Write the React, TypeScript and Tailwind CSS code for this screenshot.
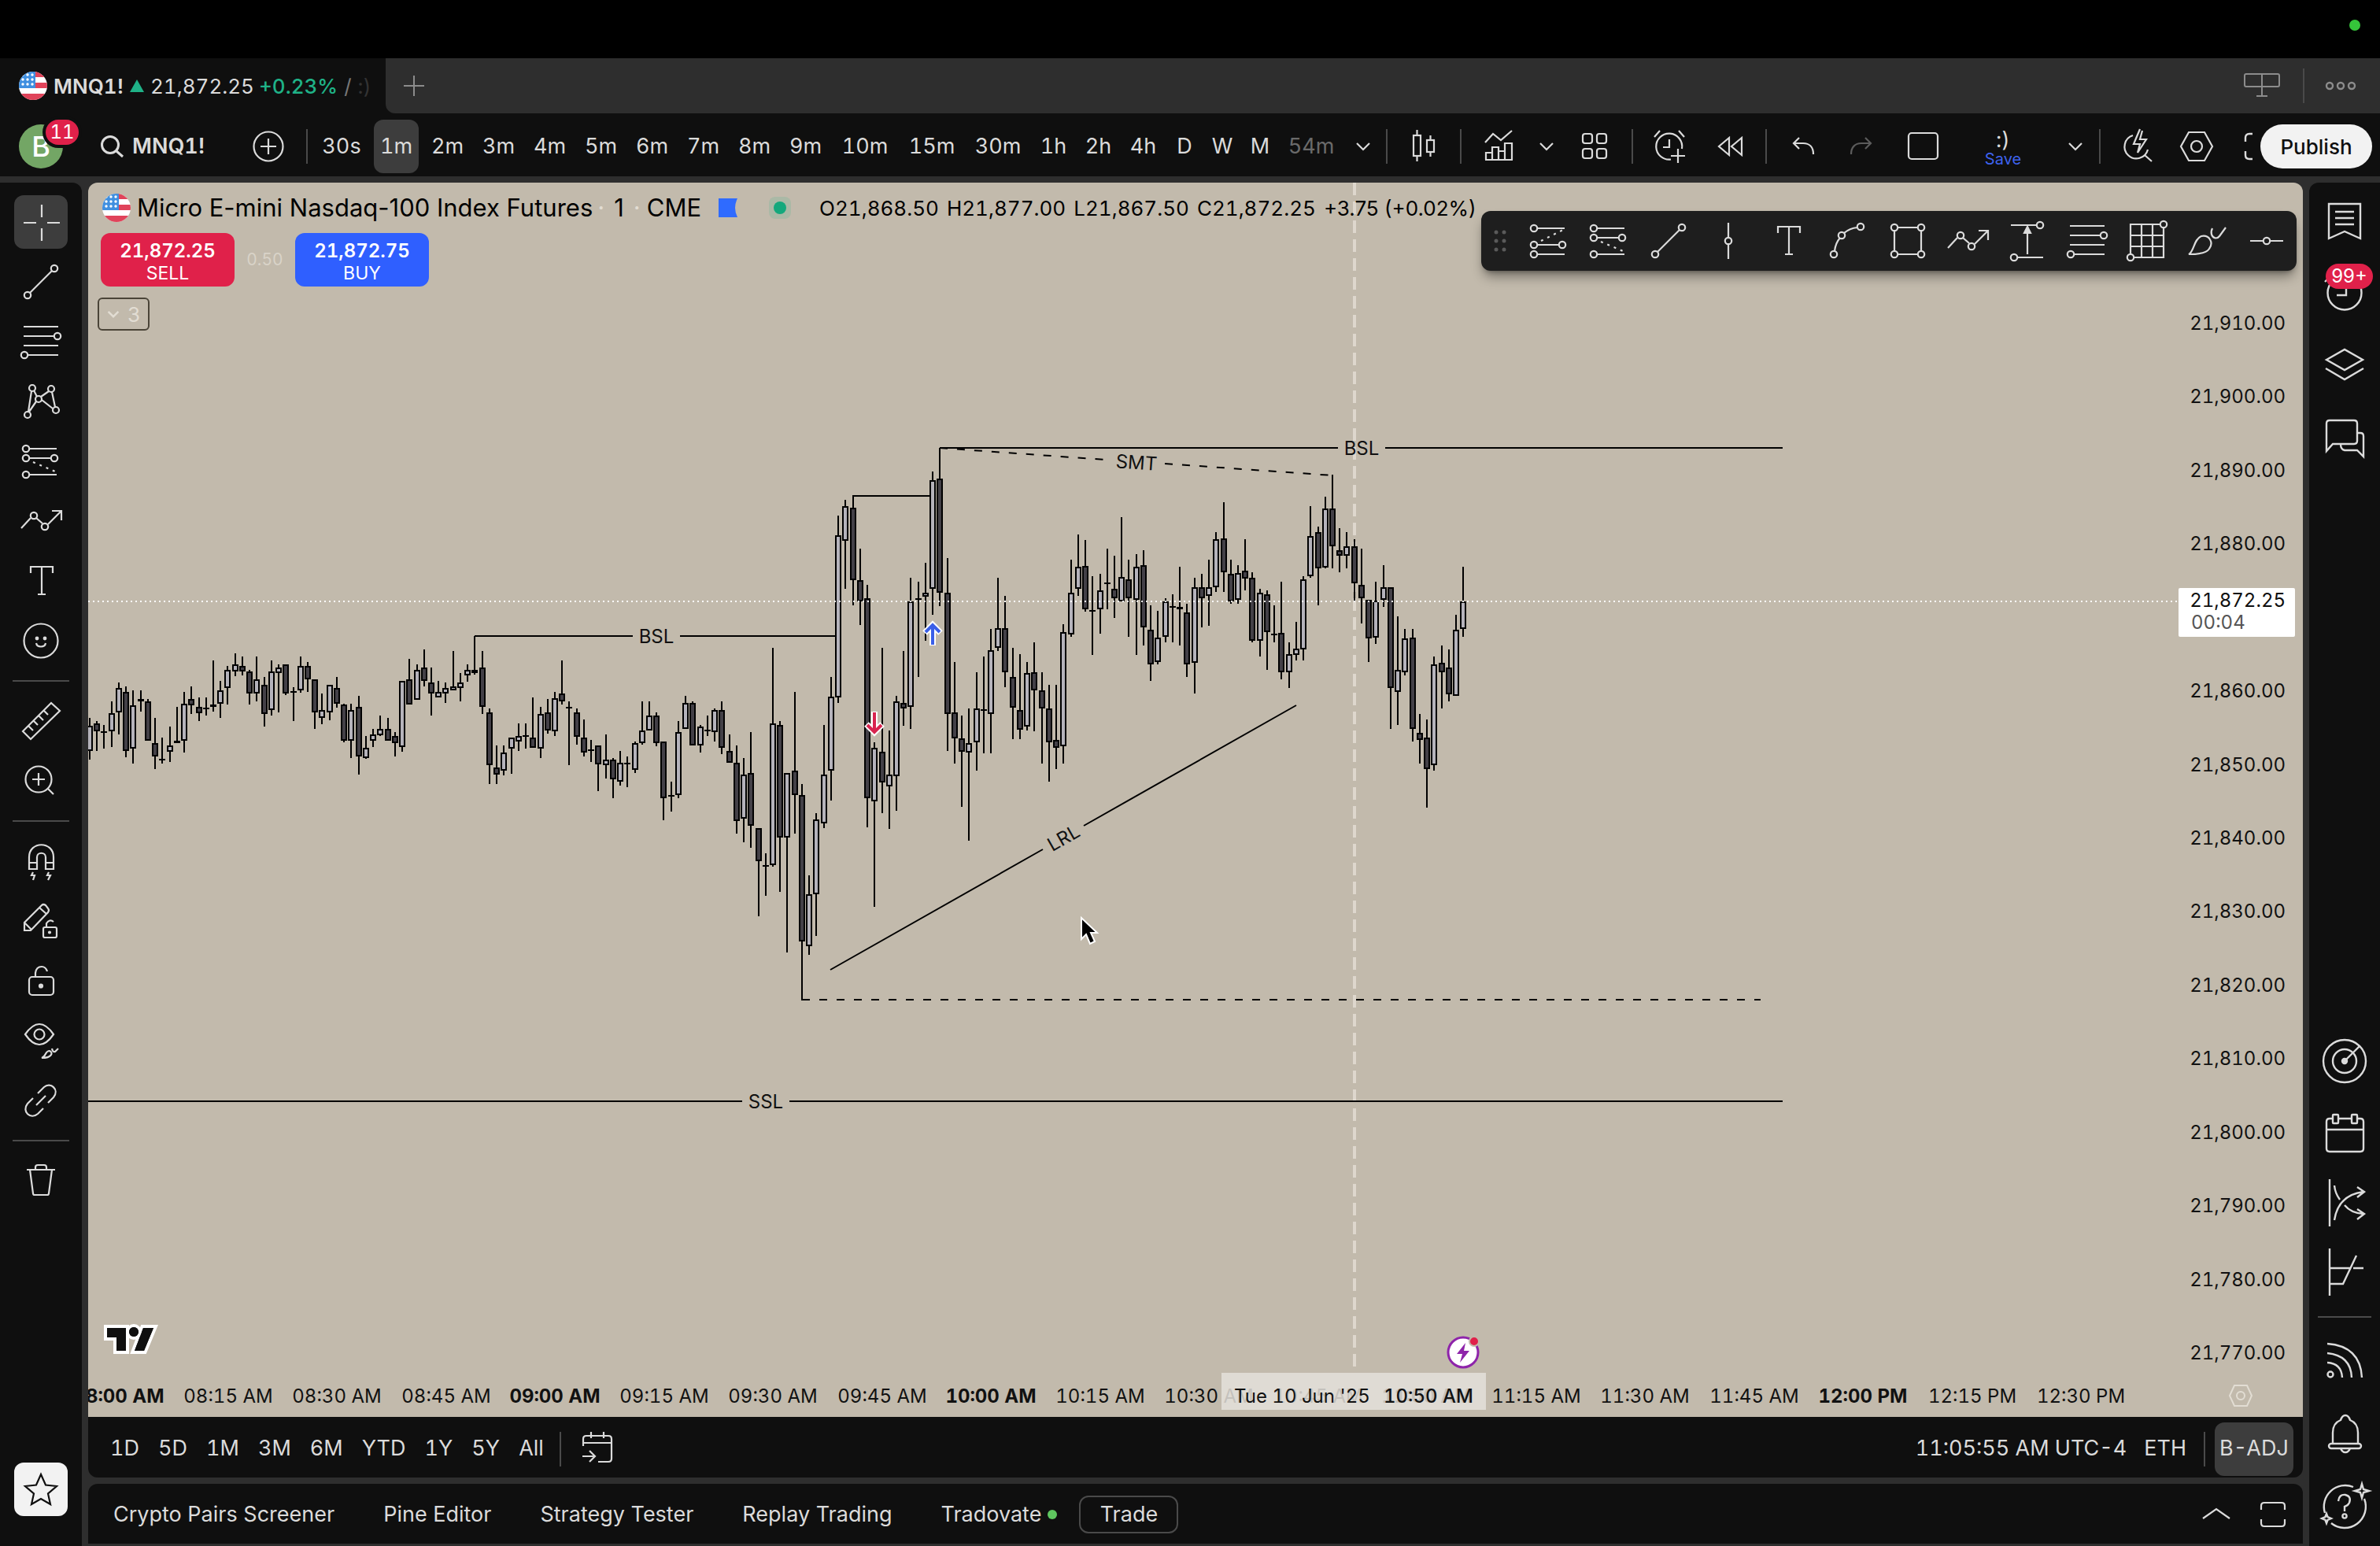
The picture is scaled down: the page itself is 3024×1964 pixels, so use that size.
import React from 'react';

type Bar = [kind: 'u' | 'd', high: number, top: number, bottom: number, low: number];

type Run = { start: number; base: number; unit: number; bars: Bar[] };

// Bars are stored per run, measured down from `base` in steps of 1 / unit
const runs: Run[] = [
  {
    start: 0,
    base: 780,
    unit: 3,
    bars: [
      ['u', 397, 427, 523, 555], ['d', 408, 418, 446, 521], ['d', 424, 446, 451, 512], ['u', 333, 377, 446, 507],
      ['u', 262, 283, 376, 458], ['d', 277, 298, 523, 547], ['u', 291, 347, 514, 569], ['d', 291, 325, 334, 373],
      ['d', 325, 334, 482, 482], ['d', 397, 493, 544, 590], ['d', 472, 552, 557, 570], ['u', 430, 502, 524, 563],
      ['u', 354, 482, 493, 493], ['u', 298, 341, 482, 527], ['d', 277, 325, 347, 380], ['d', 318, 355, 377, 407],
      ['d', 318, 357, 362, 386], ['d', 178, 346, 355, 373], ['u', 256, 292, 341, 395], ['u', 199, 214, 283, 345],
      ['u', 151, 193, 220, 238], ['d', 163, 199, 220, 233], ['d', 214, 220, 304, 345], ['u', 163, 250, 304, 332],
      ['d', 240, 271, 382, 428], ['u', 178, 220, 367, 386], ['u', 193, 205, 226, 374], ['d', 193, 193, 304, 310],
      ['d', 278, 293, 298, 407], ['u', 163, 199, 292, 301], ['d', 184, 199, 250, 297], ['d', 250, 250, 376, 438],
      ['u', 304, 367, 397, 421], ['u', 271, 271, 376, 406], ['d', 240, 283, 341, 358], ['d', 341, 346, 482, 490],
      ['u', 341, 367, 482, 548], ['d', 312, 355, 544, 611], ['u', 466, 509, 550, 553], ['u', 439, 460, 482, 506],
      ['u', 388, 439, 461, 464], ['d', 397, 439, 482, 482], ['d', 451, 466, 493, 542], ['u', 256, 256, 508, 526],
      ['d', 172, 250, 346, 346], ['u', 193, 214, 326, 326], ['d', 136, 205, 256, 275], ['d', 205, 262, 304, 386],
      ['u', 256, 298, 319, 319], ['u', 262, 283, 304, 338], ['u', 142, 277, 292, 292], ['u', 226, 262, 283, 332],
      ['u', 193, 214, 235, 259], ['u', 85, 214, 226, 232], ['d', 142, 205, 355, 380], ['d', 361, 376, 577, 648],
      ['d', 502, 586, 613, 648], ['u', 502, 529, 598, 616], ['u', 472, 472, 514, 610], ['u', 418, 466, 487, 521],
      ['d', 418, 461, 466, 512], ['d', 318, 472, 509, 509], ['u', 354, 382, 514, 548], ['d', 325, 376, 445, 457],
      ['u', 298, 320, 446, 464], ['d', 178, 304, 334, 344], ['d', 334, 355, 360, 575], ['d', 361, 376, 467, 499],
      ['d', 403, 472, 529, 542], ['d', 480, 515, 522, 563], ['d', 502, 502, 572, 676], ['u', 460, 556, 577, 627],
      ['d', 550, 556, 629, 701], ['u', 522, 566, 640, 653], ['d', 543, 566, 571, 659], ['u', 487, 493, 593, 605],
      ['u', 333, 445, 493, 499], ['u', 333, 388, 445, 445], ['d', 376, 388, 493, 505], ['d', 487, 487, 703, 785],
      ['d', 640, 690, 697, 752], ['u', 408, 451, 691, 701], ['u', 312, 340, 439, 439], ['d', 334, 340, 502, 502],
      ['u', 424, 430, 502, 527], ['d', 388, 441, 446, 464], ['u', 361, 367, 451, 485], ['d', 333, 367, 509, 533],
      ['d', 460, 523, 566, 566], ['d', 502, 566, 788, 836], ['u', 550, 613, 781, 869], ['d', 451, 607, 808, 890],
      ['d', 817, 817, 943, 1151], ['d', 913, 956, 964, 1073], ['u', 130, 418, 956, 962], ['d', 408, 424, 851, 1058],
      ['u', 607, 607, 851, 1291], ['d', 298, 598, 691, 836], ['d', 649, 691, 1249, 1472], ['u', 997, 1069, 1265, 1298],
      ['u', 760, 782, 1069, 1226], ['u', 424, 613, 797, 815], ['u', 241, 314, 598, 711],
    ],
  },
  {
    start: 103,
    base: 540,
    unit: 2.178,
    bars: [
      ['u', 251, 306, 754, 768], ['u', 206, 225, 321, 453], ['d', 196, 229, 428, 498], ['d', 343, 428, 488, 554],
      ['d', 443, 480, 1032, 1114], ['u', 877, 892, 1040, 1333], ['d', 617, 903, 988, 1074], ['u', 845, 968, 999, 1118],
      ['u', 750, 765, 971, 1068], ['d', 626, 769, 784, 833], ['u', 422, 488, 780, 840], ['d', 434, 480, 484, 696],
      ['u', 381, 464, 474, 597], ['u', 128, 153, 454, 524], ['d', 63, 149, 465, 502], ['d', 367, 465, 800, 902],
      ['d', 656, 796, 866, 936], ['d', 804, 866, 903, 1057], ['u', 784, 881, 907, 1149], ['u', 683, 785, 877, 956],
      ['d', 641, 786, 790, 909], ['u', 565, 622, 800, 909], ['u', 422, 561, 617, 624], ['d', 473, 561, 683, 726],
      ['d', 617, 698, 781, 870], ['d', 633, 788, 842, 870], ['u', 656, 687, 835, 845], ['d', 602, 683, 735, 848],
      ['d', 683, 735, 785, 936], ['d', 719, 785, 877, 987], ['d', 719, 872, 892, 951], ['u', 550, 572, 888, 936],
      ['u', 373, 464, 580, 585], ['u', 302, 393, 454, 472], ['d', 317, 389, 510, 517], ['d', 418, 511, 515, 635],
      ['u', 412, 458, 510, 578],
    ],
  },
  {
    start: 140,
    base: 540,
    unit: 2.8,
    bars: [
      ['d', 440, 561, 566, 655], ['d', 465, 583, 617, 686], ['u', 328, 540, 628, 628], ['d', 480, 550, 617, 752],
      ['u', 460, 505, 622, 818], ['d', 445, 499, 720, 783], ['d', 641, 727, 852, 910], ['u', 661, 755, 844, 850],
      ['u', 616, 628, 753, 773], ['d', 603, 645, 650, 773], ['d', 505, 647, 656, 783], ['d', 636, 667, 852, 896],
      ['u', 543, 578, 845, 955], ['d', 529, 578, 617, 719], ['u', 480, 578, 608, 713], ['u', 381, 407, 578, 594],
      ['d', 274, 402, 524, 594], ['d', 480, 530, 628, 636], ['u', 499, 525, 622, 636], ['d', 407, 519, 545, 588],
      ['d', 524, 544, 766, 773], ['u', 583, 597, 766, 823], ['d', 588, 603, 735, 870], ['d', 641, 743, 748, 773],
      ['d', 557, 740, 878, 904], ['u', 773, 814, 878, 934], ['u', 700, 794, 818, 837], ['u', 538, 550, 799, 837],
      ['u', 289, 394, 538, 543], ['d', 362, 382, 510, 640], ['u', 255, 296, 506, 510], ['d', 177, 296, 432, 510],
      ['d', 367, 446, 466, 524], ['u', 381, 432, 466, 510], ['d', 407, 432, 564, 624], ['d', 440, 569, 617, 706],
      ['d', 622, 622, 760, 843], ['u', 557, 625, 755, 778], ['u', 499, 578, 622, 647], ['d', 578, 578, 936, 1081],
      ['u', 680, 872, 950, 1067], ['u', 726, 760, 878, 889], ['d', 726, 755, 1082, 1126], ['d', 1028, 1094, 1121, 1204],
      ['d', 1047, 1112, 1224, 1361], ['u', 823, 852, 1210, 1229], ['d', 784, 845, 878, 1007], ['d', 797, 863, 957, 982],
      ['u', 675, 727, 964, 964], ['u', 504, 628, 726, 752],
    ],
  },
];

const prices = [
  '21,910.00', '21,900.00', '21,890.00', '21,880.00', '', '21,860.00', '21,850.00', '21,840.00',
  '21,830.00', '21,820.00', '21,810.00', '21,800.00', '21,790.00', '21,780.00', '21,770.00',
];

const times = [
  '08:00 AM', '08:15 AM', '08:30 AM', '08:45 AM', '09:00 AM', '09:15 AM', '09:30 AM', '09:45 AM', '10:00 AM',
  '10:15 AM', '10:30 AM', '10:45 AM', '11:00 AM', '11:15 AM', '11:30 AM', '11:45 AM', '12:00 PM', '12:15 PM', '12:30 PM',
];

const Icon: React.FC<{ children: React.ReactNode; className?: string }> = ({ children, className = 'size-14' }) => (
  <svg viewBox="0 0 56 56" className={`shrink-0 ${className}`} fill="none" stroke="currentColor" strokeWidth="2.2">
    {children}
  </svg>
);

const SideIcon: React.FC<{ children: React.ReactNode }> = ({ children }) => (
  <svg viewBox="0 0 88 88" className="size-[88px] shrink-0" fill="none" stroke="currentColor" strokeWidth="2.4">
    {children}
  </svg>
);

const TrendLine = () => (
  <Icon>
    <circle cx="11" cy="45" r="4.2" />
    <circle cx="45" cy="11" r="4.2" />
    <path d="M14 42 42 14" />
  </Icon>
);

const FibLines = () => (
  <Icon>
    <path d="M6 9H50M6 21H45M6 33H50M11 45H50" />
    <circle cx="49" cy="21" r="4.2" />
    <circle cx="7" cy="45" r="4.2" />
  </Icon>
);

const ShortPosition = () => (
  <Icon>
    <circle cx="9" cy="12" r="4.2" />
    <circle cx="9" cy="24" r="4.2" />
    <circle cx="45" cy="24" r="4.2" />
    <circle cx="9" cy="45" r="4.2" />
    <path d="M13 12H48M13 24H41M13 45H48" />
    <path d="M18 29 46 41" strokeDasharray="3 6" />
  </Icon>
);

const LongPosition = () => (
  <Icon>
    <circle cx="9" cy="12" r="4.2" />
    <circle cx="9" cy="33" r="4.2" />
    <circle cx="45" cy="33" r="4.2" />
    <circle cx="9" cy="45" r="4.2" />
    <path d="M13 12H48M13 33H41M13 45H48" />
    <path d="M18 28 46 14" strokeDasharray="3 6" />
  </Icon>
);

const Forecast = () => (
  <Icon>
    <path d="M3 37 15 24M22 24 30 31M37 32 53 16M42 15H54V27" />
    <circle cx="19" cy="21" r="4.2" />
    <circle cx="33" cy="35" r="4.2" />
  </Icon>
);

const TextTool = () => (
  <Icon>
    <path d="M15 18V10H43V18M29 10V45M24 45H34" />
  </Icon>
);

const Brush = () => (
  <Icon>
    <path d="M5 45C12 42 11 26 21 22C31 20 37 30 31 38C28 43 20 45 5 45Z" />
    <path d="M52 11 44 22C41 26 36 25 34 20C33 17 34 14 35 12" />
  </Icon>
);

const Chevron = () => (
  <svg viewBox="0 0 20 20" className="size-5" fill="none" stroke="currentColor" strokeWidth="2.2">
    <path d="M2 6 10 14 18 6" />
  </svg>
);

const Hexagon: React.FC<{ className?: string }> = ({ className }) => (
  <Icon className={className}>
    <path d="M18 10H38L48 28 38 46H18L8 28Z" />
    <circle cx="28" cy="28" r="7" />
  </Icon>
);

const UsFlag: React.FC = () => (
  <svg viewBox="0 0 36 36" className="size-9 shrink-0">
    <clipPath id="flag">
      <circle cx="18" cy="18" r="18" />
    </clipPath>
    <g clipPath="url(#flag)">
      <path fill="#fff" d="M0 0H36V36H0Z" />
      <path fill="#e0435a" d="M18 0H36V7H18ZM18 14H36V21H18ZM0 28H36V36H0Z" />
      <path fill="#3f8fe0" d="M0 0H21V21H0Z" />
      {[4, 10, 16].map((y) =>
        [5, 11, 17].map((x) => <circle key={`${x}-${y}`} cx={x} cy={y} r="1.7" fill="#fff" />),
      )}
    </g>
  </svg>
);

const Divider = () => <span className="h-11 w-0.5 shrink-0 bg-[#4a4a4a]" />;

const ToolButton: React.FC<{ label: string; children: React.ReactNode; active?: boolean }> = ({ label, children, active }) => (
  <button
    aria-label={label}
    className={`flex size-[68px] shrink-0 items-center justify-center rounded-xl ${active ? 'bg-[#3d3d3d]' : ''}`}
  >
    {children}
  </button>
);

const TabBar = () => (
  <div className="flex h-[70px] bg-[#0f0f0f]">
    <div className="flex w-[490px] shrink-0 items-center pl-6 text-[26px] tabular-nums">
      <UsFlag />
      <span className="ml-2 font-semibold">MNQ1!</span>
      <svg viewBox="0 0 18 16" className="ml-2 h-4 w-[18px]">
        <path d="M9 0 18 16H0Z" fill="#1fb287" />
      </svg>
      <span className="ml-2">21,872.25</span>
      <span className="ml-1.5 font-medium text-[#1fb287]">+0.23%</span>
      <span className="ml-2 text-[#777]">/</span>
      <span className="ml-2 text-[#333]">:)</span>
    </div>
    <div className="flex flex-1 items-center rounded-bl-xl bg-[#2e2e2e] pl-[22px] text-[#8c8c8c]">
      <button aria-label="New tab">
        <svg viewBox="0 0 28 28" className="size-7" stroke="currentColor" strokeWidth="2">
          <path d="M14 1V27M1 14H27" />
        </svg>
      </button>
      <button aria-label="Window layout" className="ml-auto">
        <svg viewBox="0 0 48 36" className="h-9 w-12" fill="none" stroke="currentColor" strokeWidth="2">
          <rect x="2" y="3" width="44" height="16" rx="2" />
          <path d="M24 3V31M17 31H31" />
        </svg>
      </button>
      <span className="ml-7 mr-6 h-11 w-0.5 bg-[#4a4a4a]" />
      <button aria-label="More" className="mr-7">
        <svg viewBox="0 0 44 20" className="h-5 w-11" fill="none" stroke="currentColor" strokeWidth="2.4">
          <circle cx="8" cy="10" r="4" />
          <circle cx="22" cy="10" r="4" />
          <circle cx="36" cy="10" r="4" />
        </svg>
      </button>
    </div>
  </div>
);

const intervals: [string, string][] = [
  ['30s', 'w-[66px]'], ['1m', 'w-[57px]'], ['2m', 'w-[57px]'], ['3m', 'w-[57px]'], ['4m', 'w-[57px]'],
  ['5m', 'w-[57px]'], ['6m', 'w-[57px]'], ['7m', 'w-[57px]'], ['8m', 'w-[57px]'], ['9m', 'w-[57px]'],
  ['10m', 'w-[78px]'], ['15m', 'w-[76px]'], ['30m', 'w-[76px]'], ['1h', 'w-[49px]'], ['2h', 'w-[49px]'],
  ['4h', 'w-[49px]'], ['D', 'w-10'], ['W', 'w-10'], ['M', 'w-10'],
];

const HeaderButton: React.FC<{ label: string; width: string; children: React.ReactNode }> = ({ label, width, children }) => (
  <button aria-label={label} className={`flex h-[68px] shrink-0 items-center justify-center ${width}`}>
    {children}
  </button>
);

const Header = () => (
  <header className="flex h-20 items-center bg-[#0f0f0f] pl-6 pr-2.5 pt-1 text-[27px] tabular-nums">
    <button aria-label="Account" className="relative size-14 shrink-0 rounded-full bg-[#73a665] text-[36px] font-medium leading-none text-white">
      B
      <span className="absolute -top-1.5 left-[34px] flex h-8 w-[42px] items-center justify-center rounded-full bg-[#e0214a] text-[24px] font-normal ring-4 ring-[#0f0f0f]">
        11
      </span>
    </button>
    <button className="ml-12 flex w-[160px] shrink-0 items-center gap-2.5 font-semibold">
      <svg viewBox="0 0 30 30" className="size-[30px]" fill="none" stroke="currentColor" strokeWidth="3">
        <circle cx="12" cy="13" r="10.5" />
        <path d="M20 21 28 28" />
      </svg>
      MNQ1!
    </button>
    <HeaderButton label="Compare" width="ml-[25px] w-14">
      <Icon>
        <circle cx="28" cy="28" r="18.5" />
        <path d="M28 18V38M18 28H38" />
      </Icon>
    </HeaderButton>
    <span className="ml-5 flex">
      <Divider />
    </span>
    <div className="ml-2.5 flex shrink-0 gap-2">
      {intervals.map(([name, width]) => (
        <button key={name} className={`h-[68px] rounded-xl ${width} ${name === '1m' ? 'bg-[#3d3d3d]' : ''}`}>
          {name}
        </button>
      ))}
      <button className="h-[68px] w-[74px] text-[#6a6a6a]">54m</button>
    </div>
    <HeaderButton label="Intervals" width="w-[58px]"><Chevron /></HeaderButton>
    <Divider />
    <HeaderButton label="Candles" width="w-[92px]">
      <Icon>
        <rect x="15" y="14" width="9" height="26" />
        <rect x="32" y="20" width="9" height="15" />
        <path d="M19.500 7V14M19.500 40V47M36.500 14V20M36.500 35V41" />
      </Icon>
    </HeaderButton>
    <Divider />
    <HeaderButton label="Indicators" width="w-[94px]">
      <Icon>
        <path d="M11 23 21 12 31 20 45 8" />
        <path d="M12 45V36H20V45M20 36V29H28V45M28 34H36V45M36 34V24H45V45M11 45H46" />
      </Icon>
    </HeaderButton>
    <HeaderButton label="Indicator list" width="w-[28px]"><Chevron /></HeaderButton>
    <HeaderButton label="Templates" width="w-[94px]">
      <Icon>
        <rect x="13" y="12" width="12" height="12" rx="3" />
        <rect x="31" y="12" width="12" height="12" rx="3" />
        <rect x="13" y="31" width="12" height="12" rx="3" />
        <rect x="31" y="31" width="12" height="12" rx="3" />
      </Icon>
    </HeaderButton>
    <Divider />
    <HeaderButton label="Alert" width="w-[92px]">
      <Icon>
        <path d="M44 31A16.500 16.500 0 1 0 30 44.500M28 19V29H20M9 16 16 8M40 8 47 16M39 31V49M30 40H48" />
      </Icon>
    </HeaderButton>
    <HeaderButton label="Replay" width="w-[62px]">
      <Icon>
        <path d="M27 17V39L14 28ZM43 17V39L30 28Z" />
      </Icon>
    </HeaderButton>
    <span className="ml-3.5 flex">
      <Divider />
    </span>
    <HeaderButton label="Undo" width="w-[92px]">
      <Icon>
        <path d="M23 17 16 24 23 31M16 24H28C36 24 41 29 41 38" />
      </Icon>
    </HeaderButton>
    <HeaderButton label="Redo" width="w-14 text-[#5c5c5c]">
      <Icon>
        <path d="M33 17 40 24 33 31M40 24H28C20 24 15 29 15 38" />
      </Icon>
    </HeaderButton>
    <HeaderButton label="Layout" width="ml-[22px] w-14">
      <Icon>
        <rect x="10" y="11" width="37" height="33" rx="4" />
      </Icon>
    </HeaderButton>
    <button className="ml-[38px] flex w-[72px] shrink-0 flex-col items-center pt-2 leading-6">
      <span className="text-[27px]">:)</span>
      <span className="text-[20px] text-[#3e63ee]">Save</span>
    </button>
    <HeaderButton label="Save menu" width="ml-[42px] w-[28px]"><Chevron /></HeaderButton>
    <span className="ml-4 flex">
      <Divider />
    </span>
    <HeaderButton label="Quick search" width="w-[94px]">
      <Icon>
        <path d="M22 14A15 15 0 1 0 41 32M37 39 46 47M31 6 23 25H31L28 36 39 19H31L34 8" />
      </Icon>
    </HeaderButton>
    <HeaderButton label="Settings" width="w-14"><Hexagon /></HeaderButton>
    <span className="ml-auto mr-2.5 flex w-3">
      <svg viewBox="0 0 12 36" className="h-9 w-3" fill="none" stroke="currentColor" strokeWidth="2.4">
        <path d="M12 2H8Q3 2 3 7V12M3 24V29Q3 34 8 34H12" />
      </svg>
    </span>
    <button className="h-14 w-[142px] shrink-0 rounded-full bg-[#f2f2f2] text-[26px] font-medium text-[#0f0f0f]">Publish</button>
  </header>
);

const SideLine = () => <span className="my-2 h-0.5 w-[72px] shrink-0 bg-[#4a4a4a]" />;

const DrawingTools = () => (
  <aside className="flex w-[104px] shrink-0 flex-col items-center gap-2 rounded-tr-xl bg-[#0f0f0f] pb-[38px] pt-4">
    <ToolButton label="Cross" active>
      <Icon>
        <path d="M6 29H22M36 29H52M29 6V22M29 36V52" />
      </Icon>
    </ToolButton>
    <ToolButton label="Trend line"><TrendLine /></ToolButton>
    <ToolButton label="Fib retracement"><FibLines /></ToolButton>
    <ToolButton label="Patterns">
      <Icon>
        <circle cx="17" cy="11" r="4" />
        <circle cx="41" cy="12" r="4" />
        <circle cx="25" cy="25" r="4" />
        <circle cx="11" cy="45" r="4" />
        <circle cx="47" cy="39" r="4" />
        <path d="M16 15 12 41M19 14 23 22M28 22 38 15M42 16 46 35M22 28 13 41M29 26 43 37" />
      </Icon>
    </ToolButton>
    <ToolButton label="Positions"><ShortPosition /></ToolButton>
    <ToolButton label="Forecast"><Forecast /></ToolButton>
    <ToolButton label="Text"><TextTool /></ToolButton>
    <ToolButton label="Emoji">
      <Icon>
        <circle cx="28" cy="28" r="21.500" />
        <path d="M22 31C23 37 33 37 34 31" />
        <circle cx="23" cy="25" r="1.300" fill="currentColor" />
        <circle cx="33" cy="25" r="1.300" fill="currentColor" />
      </Icon>
    </ToolButton>
    <SideLine />
    <ToolButton label="Measure">
      <Icon>
        <path d="M5 41 41 5 52 15 15 51ZM12 34 18 40M19 28 24 33M25 21 31 27M32 15 37 20" />
      </Icon>
    </ToolButton>
    <ToolButton label="Zoom in">
      <Icon>
        <circle cx="25" cy="26" r="16.500" />
        <path d="M25 18V34M17 26H33M37 38 44 45" />
      </Icon>
    </ToolButton>
    <SideLine />
    <ToolButton label="Magnet">
      <Icon>
        <path d="M13 38V23C13 2 44 2 44 23V38H34V23C34 16 23 16 23 23V38ZM13 30H23M34 30H44" />
        <path d="M18 42 16 46H20L18 52M38 42 36 46H40L37 52" />
      </Icon>
    </ToolButton>
    <ToolButton label="Stay in drawing mode">
      <Icon>
        <path d="M7 40V30L29 8Q31 6 34 8L37 12Q39 14 37 17L15 40ZM7 30 16 39M26 11 35 19" />
        <rect x="31" y="36" width="17" height="13" rx="2" />
        <path d="M35 36V31Q39 25 44 29" />
        <circle cx="39" cy="42.500" r="1" />
      </Icon>
    </ToolButton>
    <ToolButton label="Lock drawings">
      <Icon>
        <rect x="13" y="23" width="31" height="23" rx="4" />
        <path d="M21 23V18Q22 10 29 10Q34 10 36 16" />
        <circle cx="28" cy="34.500" r="2" fill="currentColor" />
      </Icon>
    </ToolButton>
    <ToolButton label="Hide drawings">
      <Icon>
        <path d="M8 20Q26-6 44 20Q26 46 8 20Z" />
        <circle cx="26" cy="20" r="6.500" />
        <path d="M29 50C35 48 33 41 39 41C44 43 42 50 29 50ZM50 38 46 42Q43 43 42 38" />
      </Icon>
    </ToolButton>
    <ToolButton label="Link">
      <Icon>
        <path d="M24 19 32 11C40 4 52 14 44 24L37 31M18 25 11 32C3 42 15 53 24 45L31 38M22 34 34 22" />
      </Icon>
    </ToolButton>
    <SideLine />
    <ToolButton label="Remove">
      <Icon>
        <path d="M10 14H46M14 14 18 44Q18 46 20 46H36Q38 46 38 44L42 14M21 14V11Q21 8 24 8H32Q35 8 35 11V14" />
      </Icon>
    </ToolButton>
    <button aria-label="Favorites" className="mt-auto flex size-[68px] items-center justify-center rounded-xl bg-[#f2f2f2] text-[#0f0f0f]">
      <Icon>
        <path d="M28 9 34 22.500 48 24 37 33.500 40 47 28 40 16 47 19 33.500 8 24 22 22.500Z" />
      </Icon>
    </button>
  </aside>
);

const Widgets = () => (
  <aside className="flex w-[90px] shrink-0 flex-col items-center rounded-tl-xl bg-[#0f0f0f] pt-[5px]">
    <button aria-label="Watchlist" className="flex">
      <SideIcon>
        <path d="M24 22H64V66L44 57 24 66ZM32 32H56M32 40H56M32 48H56" />
      </SideIcon>
    </button>
    <button aria-label="Alerts" className="relative mt-1 flex">
      <SideIcon>
        <circle cx="44" cy="43" r="21.500" />
        <path d="M34 46H46V36M19 29 26 22" />
      </SideIcon>
      <span className="absolute left-5 top-1.5 flex h-8 w-[60px] items-center justify-center rounded-full bg-[#e0214a] text-[24px] text-white">
        99+
      </span>
    </button>
    <button aria-label="Object tree" className="mt-0.5 flex">
      <SideIcon>
        <path d="M21 38 44 25 67 38 44 51ZM20 49 44 63 68 49" />
      </SideIcon>
    </button>
    <button aria-label="Chats" className="mt-1.5 flex">
      <SideIcon>
        <path d="M21 60V25Q21 21 25 21H56Q60 21 60 25V47Q60 51 56 51H29Z" />
        <path d="M60 37H64Q68 37 68 41V67L60 59H44Q39 58 39 51" />
      </SideIcon>
    </button>
    <button aria-label="Screeners" className="mt-auto flex">
      <SideIcon>
        <circle cx="44" cy="44" r="27" />
        <circle cx="44" cy="44" r="15" />
        <circle cx="44" cy="44" r="3" fill="currentColor" />
        <path d="M44 44 63 25" />
      </SideIcon>
    </button>
    <button aria-label="Calendars" className="mt-1 flex">
      <SideIcon>
        <path d="M29 25H25Q21 25 21 29V63Q21 67 25 67H64Q68 67 68 63V29Q68 25 64 25H60M36 25H53M21 39H68" />
        <rect x="29" y="20" width="7" height="11" rx="1" />
        <rect x="53" y="20" width="7" height="11" rx="1" />
      </SideIcon>
    </button>
    <button aria-label="Options" className="flex">
      <SideIcon>
        <path d="M25 14V74M31 22Q32 32 38 40M44 47Q52 57 68 58M60 52 69 58 60 65M31 66Q36 34 68 30M60 24 69 30 60 37" />
      </SideIcon>
    </button>
    <button aria-label="Strategy" className="flex">
      <SideIcon>
        <path d="M25 14V74M25 39H52M55 39H68M25 59H42L59 23" />
      </SideIcon>
    </button>
    <span className="mb-2.5 mt-3 h-0.5 w-[68px] bg-[#4a4a4a]" />
    <button aria-label="Streams" className="flex">
      <SideIcon>
        <circle cx="26" cy="62" r="3.500" />
        <path d="M22 47Q40 48 41 66M22 35Q52 38 53 66M22 23Q64 26 66 66" />
      </SideIcon>
    </button>
    <button aria-label="Notifications" className="mt-1.5 flex">
      <SideIcon>
        <path d="M29 56V42Q29 30 39 26Q41 20 45 20Q49 20 51 26Q61 30 61 42V56" />
        <rect x="24" y="56" width="41" height="6" rx="3" />
        <path d="M39 62Q41 67 45 67Q49 67 51 62" />
      </SideIcon>
    </button>
    <button aria-label="Help" className="mb-1.5 mt-1 flex">
      <SideIcon>
        <path d="M55 19A27 27 0 0 0 19 52M27 65A27 27 0 0 0 69 34M36 37Q37 28 45 29Q53 31 50 39Q48 43 44 44V50" />
        <circle cx="44" cy="56" r="2.600" />
        <path d="M66 15 68 22 75 24 68 26 66 33 64 26 57 24 64 22ZM21 53 22.500 57 27 59 22.500 61 21 65 19.500 61 15 59 19.500 57Z" />
      </SideIcon>
    </button>
  </aside>
);

const favorites: [string, React.ReactNode][] = [
  ['Long position', <LongPosition />],
  ['Short position', <ShortPosition />],
  ['Trend line', <TrendLine />],
  ['Vertical line', <Icon><path d="M28 5V24M28 32V51" /><circle cx="28" cy="28" r="4.200" /></Icon>],
  ['Text', <TextTool />],
  ['Curve', <Icon><circle cx="10" cy="45" r="4.200" /><circle cx="20" cy="21" r="4.200" /><circle cx="44" cy="10" r="4.200" /><path d="M11 41Q12 31 18 24M23 18Q30 12 40 11" /></Icon>],
  ['Rectangle', <Icon><circle cx="11" cy="11" r="4.200" /><circle cx="45" cy="11" r="4.200" /><circle cx="11" cy="45" r="4.200" /><circle cx="45" cy="45" r="4.200" /><path d="M15 11H41M15 45H41M11 15V41M45 15V41" /></Icon>],
  ['Forecast', <Forecast />],
  ['Price range', <Icon><path d="M7 8H39M15 49H48M28 45V14" /><path d="M28 10 24 18H32Z" fill="currentColor" /><circle cx="44" cy="8" r="4.200" /><circle cx="11" cy="49" r="4.200" /></Icon>],
  ['Fib retracement', <FibLines />],
  ['Grid', <Icon><path d="M7 45V7H45M49 11V49H11M7 21H49M7 35H49M21 7V49M35 7V49" /><circle cx="49" cy="7" r="4.200" /><circle cx="7" cy="49" r="4.200" /></Icon>],
  ['Brush', <Brush />],
  ['Horizontal line', <Icon><path d="M7 28H24M32 28H49" /><circle cx="28" cy="28" r="4.200" /></Icon>],
];

const FavoritesBar = () => (
  <div className="absolute right-2 top-9 flex h-[76px] items-center rounded-xl bg-[#1e1e1e] pl-[14px] shadow-lg shadow-black/40">
    <svg viewBox="0 0 20 32" className="mr-3.5 h-8 w-5" fill="#5a5a5a">
      {[5, 16, 27].map((y) => (
        <g key={y}>
          <circle cx="5" cy={y} r="2.500" />
          <circle cx="15" cy={y} r="2.500" />
        </g>
      ))}
    </svg>
    <div className="flex">
      {favorites.map(([label, icon]) => (
        <button key={label} aria-label={label} className="flex w-[76px] items-center justify-center">
          {icon}
        </button>
      ))}
    </div>
  </div>
);

const Candles = () => (
  <g stroke="none">
    {runs.map(({ start, base, unit, bars }) =>
      bars.map(([kind, high, top, bottom, low], i) => {
        const x = Math.round(114 + (start + i) * 9.234);
        const y = (v: number) => Math.round(base + v / unit);
        const height = y(bottom) - y(top);
        return (
          <g key={start + i}>
            <rect x={x - 1} y={y(high)} width={2} height={y(low) - y(high)} fill="#000" />
            <rect x={x - 4} y={y(top)} width={8} height={Math.max(height, 2)} fill="#000" />
            {height > 4 && (
              <rect x={x - 2} y={y(top) + 2} width={4} height={height - 4} fill={kind === 'u' ? '#b5b3bb' : '#434047'} />
            )}
          </g>
        );
      }),
    )}
  </g>
);

const Chart = () => (
  <svg
    viewBox="112 232 2814 1568"
    preserveAspectRatio="xMinYMin slice"
    className="absolute inset-0 h-full w-full tabular-nums"
    fontFamily="Inter, sans-serif"
    fontSize="24"
  >
    <path d="M1721 232V1742" stroke="#f0ebe3" strokeOpacity="0.600" strokeWidth="4" strokeDasharray="16 8" />
    <g stroke="#000" strokeWidth="2" fill="none">
      <path d="M603 808H804M864 808H1062M1083 630H1182M1194 569H1700M1760 569H2265M112 1399H943M1003 1399H2265" />
      <path d="M1055 1232 1325 1079M1377 1049 1647 896" />
      <path d="M1194 569 1404 584M1480 589 1693 604M1019 1270H2237" strokeDasharray="10 12" />
    </g>
    <Candles />
    <g textAnchor="middle" fill="#111">
      <text x="834" y="817">BSL</text>
      <text x="1730" y="578">BSL</text>
      <text x="973" y="1408">SSL</text>
      <text x="1444" y="596" transform="rotate(4 1444 587)">SMT</text>
      <text x="1351" y="1073" transform="rotate(-29.600 1351 1064)">LRL</text>
    </g>

    <path d="M112 764H2768" stroke="#fff" strokeWidth="2" strokeDasharray="2 4" />

    <path d="M1111 904V930M1101 920 1111 930 1121 920" stroke="#fff" strokeWidth="8" fill="none" />
    <path d="M1111 905V930M1102 921 1111 930 1120 921" stroke="#d8244f" strokeWidth="4" fill="none" />
    <path d="M1185 820V794M1175 804 1185 794 1195 804" stroke="#fff" strokeWidth="8" fill="none" />
    <path d="M1185 819V794M1176 803 1185 794 1194 803" stroke="#3a5fe8" strokeWidth="4" fill="none" />

    <g fill="#111">
      {prices.map((price, i) => (
        <text key={i} x="2904" y={Math.round(419 + i * 93.430)} textAnchor="end">
          {price}
        </text>
      ))}
      {times.map((time, i) => (
        <text key={time} x={Math.round(151 + i * 138.500)} y="1782" textAnchor="middle" fontWeight={i % 4 ? 400 : 700}>
          {time}
        </text>
      ))}
    </g>

    <rect x="2768" y="747" width="148" height="62" rx="2" fill="#fff" />
    <text x="2904" y="771" textAnchor="end" fill="#0f0f0f">21,872.25</text>
    <text x="2784" y="799" fill="#555">00:04</text>

    <rect x="1552" y="1744" width="336" height="47" fill="#e4e0db" fillOpacity="0.850" />
    <text x="1568" y="1782" fill="#111">{"Tue 10 Jun '25"}</text>
    <text x="1872" y="1782" fill="#111" textAnchor="end" fontWeight="500">10:50 AM</text>

    <circle cx="1859" cy="1718" r="19" fill="#fff" stroke="#8e24aa" strokeWidth="3" />
    <path d="M1862 1706 1851 1720H1858L1855 1731 1867 1716H1860Z" fill="#8e24aa" />
    <circle cx="1873" cy="1704" r="6" fill="#e0214a" stroke="#c2baac" strokeWidth="2" />

    <g fill="none" stroke="#e2ddd3" strokeWidth="2">
      <path d="M2839 1760H2855L2861 1773 2855 1786H2839L2833 1773Z" />
      <circle cx="2847" cy="1773" r="5" />
    </g>

    <g stroke="#fff" strokeWidth="8" strokeLinejoin="miter" paintOrder="stroke" fill="#0f0f0f">
      <path d="M136 1687H160V1716H148V1699H136Z" />
      <path d="M182 1687H195L183 1716H171Z" />
      <circle cx="170" cy="1692" r="6" />
    </g>
    <g fill="#0f0f0f">
      <path d="M136 1687H160V1716H148V1699H136Z" />
      <path d="M182 1687H195L183 1716H171Z" />
      <circle cx="170" cy="1692" r="6" />
    </g>

    <path d="M1374 1166V1193L1380 1187 1385 1199 1391 1196 1386 1185H1394Z" fill="#000" stroke="#fff" strokeWidth="2" />
  </svg>
);

const Legend = () => (
  <div className="relative pl-4 pt-3.5 text-black">
    <div className="flex h-9 items-center pl-0.5">
      <UsFlag />
      <h1 className="ml-2 text-[31px]">Micro E-mini Nasdaq-100 Index Futures</h1>
      <span className="ml-1.5 text-[31px] text-[#e2ddd3]">·</span>
      <span className="ml-3 text-[31px]">1</span>
      <span className="ml-3 text-[31px] text-[#e2ddd3]">·</span>
      <span className="ml-2 text-[31px]">CME</span>
      <svg viewBox="0 0 24 24" className="ml-[22px] size-6">
        <path d="M0 0H24Q18 12 24 24H0Z" fill="#2f6bff" />
      </svg>
      <span className="ml-10 flex size-7 items-center justify-center rounded-lg bg-[#1fb287]/15">
        <span className="size-4 rounded-full bg-[#14a87c]" />
      </span>
      <div className="ml-9 flex gap-2.5 text-[26px] tabular-nums">
        <span>O21,868.50</span>
        <span>H21,877.00</span>
        <span>L21,867.50</span>
        <span>C21,872.25</span>
        <span className="normal-nums">+3.75 (+0.02%)</span>
      </div>
    </div>
    <div className="mt-3.5 flex items-center tabular-nums text-white">
      <button className="flex h-[68px] w-[170px] flex-col items-center justify-center rounded-xl bg-[#e0214a] pt-1.5 leading-7">
        <span className="text-[24px] font-semibold">21,872.25</span>
        <span className="text-[23px]">SELL</span>
      </button>
      <span className="w-[77px] text-center text-[21px] text-[#d9d3c8]">0.50</span>
      <button className="flex h-[68px] w-[170px] flex-col items-center justify-center rounded-xl bg-[#2f5fff] pt-1.5 leading-7">
        <span className="text-[24px] font-semibold">21,872.75</span>
        <span className="text-[23px]">BUY</span>
      </button>
    </div>
    <button className="-ml-1 mt-3.5 flex h-[42px] w-[66px] items-center justify-center gap-2.5 rounded-md border-2 border-[#4a4438] text-[26px] text-[#e2ddd3]">
      <svg viewBox="0 0 20 20" className="size-4" fill="none" stroke="currentColor" strokeWidth="3">
        <path d="M2 6 10 14 18 6" />
      </svg>
      3
    </button>
  </div>
);

const ranges = ['1D', '5D', '1M', '3M', '6M', 'YTD', '1Y', '5Y', 'All'];

const RangeBar = () => (
  <div className="flex h-[77px] items-center rounded-b-xl bg-[#0f0f0f] pl-7 pr-3 pt-1 text-[27px] tabular-nums">
    <div className="flex gap-6">
      {ranges.map((range) => (
        <button key={range}>{range}</button>
      ))}
    </div>
    <span className="ml-5 flex">
      <Divider />
    </span>
    <button aria-label="Go to" className="ml-[18px]">
      <Icon>
        <path d="M10 24V15Q10 11 14 11H42Q46 11 46 15V40Q46 44 42 44H29M10 20H46M20 6V14M36 6V14M9 37H25M18 30 25 37 18 44" />
      </Icon>
    </button>
    <button className="ml-auto">11:05:55 AM UTC-4</button>
    <button className="ml-[22px]">ETH</button>
    <span className="ml-[22px] flex">
      <Divider />
    </span>
    <button className="ml-3 h-[68px] w-[100px] rounded-xl bg-[#3d3d3d]">B-ADJ</button>
  </div>
);

const PanelTabs = () => (
  <footer className="mt-2 flex h-[76px] items-center rounded-t-xl bg-[#0f0f0f] pl-8 pt-0.5 text-[27px]">
    <div className="flex gap-[62px]">
      <button>Crypto Pairs Screener</button>
      <button>Pine Editor</button>
      <button>Strategy Tester</button>
      <button>Replay Trading</button>
      <button className="flex items-center gap-2">
        Tradovate
        <span className="size-3 rounded-full bg-[#5fc65f]" />
      </button>
    </div>
    <button className="ml-7 h-12 w-[126px] rounded-xl border-2 border-[#4a4a4a]">Trade</button>
    <button aria-label="Open panel" className="ml-auto mr-4">
      <Icon>
        <path d="M11 33 28 21 45 33" />
      </Icon>
    </button>
    <button aria-label="Maximize panel" className="mr-2.5">
      <Icon>
        <path d="M13 22V17Q13 13 17 13H39Q43 13 43 17V22M13 34V39Q13 43 17 43H39Q43 43 43 39V34" />
      </Icon>
    </button>
  </footer>
);

const App: React.FC = () => {
  return (
    <div className="flex h-screen flex-col overflow-hidden bg-[#2e2e2e] font-[Inter,sans-serif] text-[#dbdbdb]">
      <div className="flex h-[74px] shrink-0 items-start justify-end bg-black pr-[25px] pt-[25px]">
        <span className="size-3.5 rounded-full bg-[#35c43a]" />
      </div>
      <TabBar />
      <Header />
      <div className="mt-2 flex min-h-0 flex-1 gap-2">
        <DrawingTools />
        <main className="flex min-w-0 flex-1 flex-col pb-[3px]">
          <section className="relative min-h-0 flex-1 overflow-hidden rounded-t-xl bg-[#c2baac]">
            <Chart />
            <Legend />
            <FavoritesBar />
          </section>
          <RangeBar />
          <PanelTabs />
        </main>
        <Widgets />
      </div>
    </div>
  );
};

export default App;
